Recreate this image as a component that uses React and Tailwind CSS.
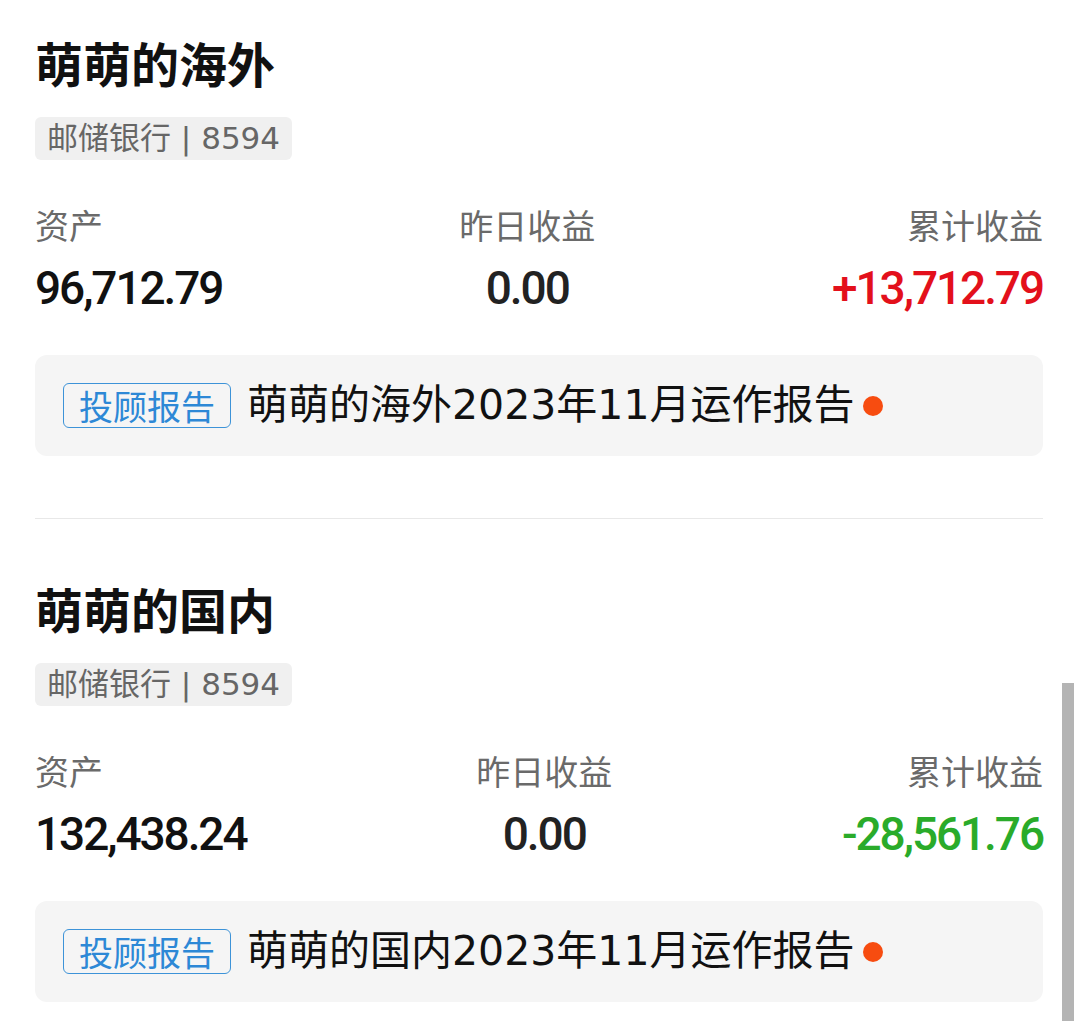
const cjk = "font-['Noto_Sans_CJK_SC','Noto_Sans',sans-serif]";
const wide = "font-['DejaVu_Sans','Noto_Sans_CJK_SC',sans-serif]";
const num = "font-['Roboto','Noto_Sans_CJK_SC',sans-serif]";

const accounts = [
  {
    name: '萌萌的海外',
    bank: '邮储银行 | 8594',
    asset: '96,712.79',
    yesterday: '0.00',
    total: '+13,712.79',
    up: true,
  },
  {
    name: '萌萌的国内',
    bank: '邮储银行 | 8594',
    asset: '132,438.24',
    yesterday: '0.00',
    total: '-28,561.76',
    up: false,
  },
];

function Stat({ label, value, align, color }) {
  return (
    <div className={`flex flex-col ${align}`}>
      <div className={`${cjk} text-[34px] leading-[34px] text-[#6a6a6a]`}>{label}</div>
      <div className={`${num} mt-[23px] text-[46px] leading-[46px] font-medium tracking-[-0.045em] ${color}`}>
        {value}
      </div>
    </div>
  );
}

function AccountCard({ account }) {
  return (
    <div>
      <h2 className={`${cjk} text-[48px] leading-[48px] font-bold text-[#111]`}>{account.name}</h2>

      <div className="mt-[31px] flex">
        <span className={`${wide} rounded-[6px] bg-[#f0f0f0] px-[12px] text-[31px] leading-[43px] text-[#666]`}>
          {account.bank}
        </span>
      </div>

      <div className="mt-[48px] flex items-start justify-between">
        <Stat label="资产" value={account.asset} align="items-start" color="text-[#111]" />
        <Stat label="昨日收益" value={account.yesterday} align="items-center" color="text-[#222]" />
        <Stat
          label="累计收益"
          value={account.total}
          align="items-end"
          color={account.up ? 'text-[#e3101b]' : 'text-[#2aab2a]'}
        />
      </div>

      <div className="mt-[44px] flex h-[101px] items-center rounded-[12px] bg-[#f5f5f5] px-[28px]">
        <span
          className={`${cjk} rounded-[6px] border-[1.5px] border-[#3d93d8] px-[15px] text-[34px] leading-[43px] text-[#2d88d6]`}
        >
          投顾报告
        </span>
        <span className={`${wide} ml-[16px] text-[41px] leading-[41px] text-[#111]`}>
          {account.name}2023年11月运作报告
        </span>
        <span className="ml-[8px] h-[20px] w-[20px] rounded-full bg-[#f74c10]" />
      </div>
    </div>
  );
}

export default function App() {
  return (
    <div className="relative h-[1021px] w-[1080px] overflow-hidden bg-white pl-[35px] pr-[37px] pt-[38px]">
      <AccountCard account={accounts[0]} />
      <div className="mb-[65px] mt-[62px] h-px bg-[#e8e8e8]" />
      <AccountCard account={accounts[1]} />

      {/* overlay scrollbar */}
      <div className="absolute right-[6px] top-[683px] bottom-0 w-[12px] bg-[#b4b4b4]" />
    </div>
  );
}
